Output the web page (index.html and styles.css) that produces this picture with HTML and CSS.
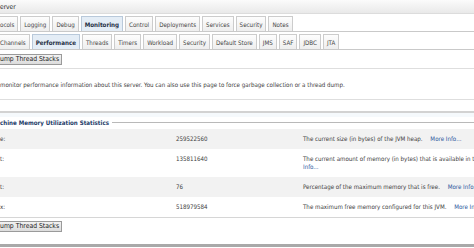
FILE: index.html
```html
<!DOCTYPE html>
<html lang="en">
<head>
    <meta charset="UTF-8">
    <title>Server - Monitoring - Performance</title>
    <link rel="stylesheet" href="styles.css">
</head>
<body>

    <div class="titlebar"><span>erver</span></div>

    <div class="tabs tabs-main">
        <span class="tab cut">ocols</span>
        <span class="tab">Logging</span>
        <span class="tab">Debug</span>
        <span class="tab active">Monitoring</span>
        <span class="tab">Control</span>
        <span class="tab">Deployments</span>
        <span class="tab">Services</span>
        <span class="tab">Security</span>
        <span class="tab">Notes</span>
    </div>

    <div class="tabs tabs-sub">
        <span class="tab cut">Channels</span>
        <span class="tab active">Performance</span>
        <span class="tab">Threads</span>
        <span class="tab">Timers</span>
        <span class="tab">Workload</span>
        <span class="tab">Security</span>
        <span class="tab">Default Store</span>
        <span class="tab">JMS</span>
        <span class="tab">SAF</span>
        <span class="tab">JDBC</span>
        <span class="tab">JTA</span>
    </div>

    <div class="toolbar">
        <button class="btn">ump Thread Stacks</button>
    </div>

    <p class="intro">monitor performance information about this server. You can also use this page to force garbage collection or a thread dump.</p>

    <div class="section-top"></div>

    <div class="legend">
        <span>chine Memory Utilization Statistics</span>
        <span class="rule"></span>
    </div>

    <table class="stats">
        <tr class="odd">
            <td class="label">e:</td>
            <td class="value">259522560</td>
            <td class="desc">The current size (in bytes) of the JVM heap. <a href="#">More Info...</a></td>
        </tr>
        <tr>
            <td class="label">t:</td>
            <td class="value">135811640</td>
            <td class="desc">The current amount of memory (in bytes) that is available in the JVM heap. <a href="#">More Info...</a></td>
        </tr>
        <tr class="odd">
            <td class="label">t:</td>
            <td class="value">76</td>
            <td class="desc">Percentage of the maximum memory that is free. <a href="#">More Info...</a></td>
        </tr>
        <tr>
            <td class="label">x:</td>
            <td class="value">518979584</td>
            <td class="desc">The maximum free memory configured for this JVM. <a href="#">More Info...</a></td>
        </tr>
    </table>

    <div class="toolbar toolbar-bottom">
        <button class="btn">ump Thread Stacks</button>
    </div>

    <div class="footer-rule"></div>

</body>
</html>
```

FILE: styles.css
```css
/* General Page Styling */
body {
    margin: 0;
    width: 474px;
    height: 248px;
    overflow: hidden;
    background: #ffffff;
    font-family: "DejaVu Sans", sans-serif;
    font-stretch: condensed;
    font-size: 6.15px;
    color: #3c3c3c;
}

p { margin: 0; }

/* Title Bar */
.titlebar {
    height: 13px;
    display: flex;
    align-items: center;
    background: linear-gradient(to bottom, #fbfbfb, #e9e9e9);
    border-bottom: 1px solid #dcdcdc;
    font-size: 6.6px;
    color: #222222;
}

/* Tabs */
.tabs {
    display: flex;
    align-items: flex-end;
    gap: 2px;
    height: 16px;
    margin-top: 1px;
    border-bottom: 1px solid #c9c9c9;
    width: 520px;
}

.tab {
    height: 14px;
    display: flex;
    align-items: center;
    padding: 0 3px;
    border: 1px solid #cccccc;
    border-bottom: none;
    background: linear-gradient(to bottom, #fdfdfd, #eeeeee);
    font-size: 6.2px;
    color: #444444;
    white-space: nowrap;
}

.tab.cut {
    border-left: none;
    padding-left: 0;
}

.tab.active {
    background: #e4edf6;
    border-color: #b9c9da;
    font-weight: bold;
    color: #1f2f44;
}

/* Buttons */
.toolbar {
    height: 18px;
    display: flex;
    align-items: center;
    border-bottom: 1px solid #dedede;
}

.btn {
    height: 11px;
    padding: 0 2px 0 0;
    border: 1px solid #9a9a9a;
    border-left: none;
    background: linear-gradient(to bottom, #f2f2f2, #dcdcdc);
    font-family: "DejaVu Sans", sans-serif;
    font-stretch: condensed;
    font-size: 6.8px;
    color: #222222;
    line-height: 9px;
}

/* Intro text */
.intro {
    height: 30px;
    display: flex;
    align-items: center;
    border-bottom: 1px solid #dedede;
    white-space: nowrap;
}

/* Section header */
.section-top {
    margin-top: 11px;
    height: 4px;
    border-top: 2px solid #d2d2d2;
    background: #f5f9fc;
}

.legend {
    height: 10px;
    display: flex;
    align-items: center;
    gap: 3px;
    font-weight: bold;
    color: #1d3c68;
    white-space: nowrap;
}

.legend .rule {
    flex: 1;
    height: 1px;
    background: #b9b9b9;
}

/* Stats table */
.stats {
    width: 535px;
    table-layout: fixed;
    margin-top: 2px;
    border-collapse: collapse;
    border-bottom: 1px solid #d6d6d6;
}

.stats td {
    padding: 6px 0;
    line-height: 8px;
    vertical-align: top;
}

.stats tr.odd { background: #f2f2f2; }

.stats .label { width: 176px; }
.stats .value { width: 127px; }
.stats .desc { width: 232px; }

.stats a {
    color: #2a569c;
    text-decoration: none;
    margin-left: 6px;
}

.toolbar-bottom {
    border-bottom: none;
    height: 17px;
}

.footer-rule {
    margin-top: 9px;
    height: 3px;
    background: #a9a9a9;
}
```
